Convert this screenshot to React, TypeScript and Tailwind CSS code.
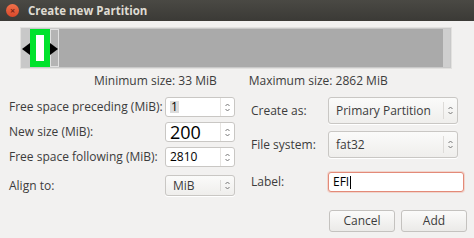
import React from "react";

const font = { fontFamily: '"Open Sans", "Noto Sans", sans-serif' };

function SpinArrows() {
    return (
        <svg width="7" height="11" viewBox="0 0 7 11" className="text-[#777]">
            <path d="M1.5 4 L3.5 2 L5.5 4" fill="none" stroke="currentColor" strokeWidth="1" />
            <path d="M1.5 7 L3.5 9 L5.5 7" fill="none" stroke="currentColor" strokeWidth="1" />
        </svg>
    );
}

function SpinBox({ value, big, selected }: { value: string; big?: boolean; selected?: boolean }) {
    return (
        <div className="flex h-[20px] w-[70px] items-stretch rounded-[3px] border border-[#c9c7c4] bg-white">
            <div className="flex flex-1 items-center pl-[4px]">
                <span
                    className={`leading-none text-black ${big ? "text-[18px]" : "text-[12px] text-[#3c3c3c]"} ${selected ? "bg-[#dcdcdc] px-[1px]" : ""}`}
                >
                    {value}
                </span>
            </div>
            <div className="flex w-[14px] items-center justify-center border-l border-[#e6e4e1]">
                <SpinArrows />
            </div>
        </div>
    );
}

function Combo({ value, w, h }: { value: string; w: string; h: string }) {
    return (
        <div className={`flex ${w} ${h} items-stretch rounded-[3px] border border-[#c9c7c4] bg-gradient-to-b from-[#fbfbfa] to-[#efeeec] shadow-[0_1px_0_#fff]`}>
            <div className="flex flex-1 items-center pl-[7px] text-[12px] text-[#3c3c3c]">{value}</div>
            <div className="my-[4px] flex w-[14px] items-center justify-center border-l border-[#dddbd8]">
                <SpinArrows />
            </div>
        </div>
    );
}

function Button({ label }: { label: string }) {
    return (
        <div className="flex h-[22px] w-[66px] items-center justify-center rounded-[3px] border border-[#c4c2bf] bg-gradient-to-b from-[#fbfbfa] to-[#ebeae8] text-[12px] text-[#3c3c3c]">
            {label}
        </div>
    );
}

export default function App() {
    return (
        <div className="h-[238px] w-[474px] overflow-hidden bg-[#f2f1f0]" style={font}>
            {/* title bar */}
            <div className="flex h-[21px] items-center bg-gradient-to-b from-[#4a4944] to-[#3b3a36] pl-[6px]">
                <div className="flex h-[13px] w-[13px] items-center justify-center rounded-full bg-gradient-to-b from-[#f0714a] to-[#d9472a]">
                    <span className="text-[9px] font-bold leading-none text-[#7a2415]">×</span>
                </div>
                <span className="ml-[9px] text-[11.5px] font-bold text-[#dfdbd2]">Create new Partition</span>
            </div>

            {/* partition slider */}
            <div className="ml-[20px] mt-[6px] flex h-[42px] w-[432px] border border-[#e2e1df] bg-[#e8e7e5]">
                <div className="relative flex flex-1 border border-[#c9c9c9]">
                    <div className="w-[8px] bg-[#c8c8c8]" />
                    <div className="flex w-[20px] items-center justify-center bg-[#00e22c]">
                        <div className="h-[26px] w-[8px] bg-white" />
                    </div>
                    <div className="w-[9px] border border-[#e0e0e0] bg-[#b4b4b4]" />
                    <div className="flex-1 bg-[#aaaaaa]" />
                    <div className="w-[7px] bg-[#cfcfcf]" />
                    <svg className="absolute left-[0px] top-[14px]" width="9" height="12" viewBox="0 0 9 12">
                        <path d="M8 0 L0 6 L8 12 Z" fill="#000" />
                    </svg>
                    <svg className="absolute left-[28px] top-[14px]" width="9" height="12" viewBox="0 0 9 12">
                        <path d="M0 0 L8 6 L0 12 Z" fill="#000" />
                    </svg>
                </div>
            </div>

            {/* size limits */}
            <div className="mt-[4px] flex text-[12px] leading-[16px] text-[#3c3c3c]">
                <span className="ml-[94px]">Minimum size: 33 MiB</span>
                <span className="ml-[32px]">Maximum size: 2862 MiB</span>
            </div>

            <div className="mt-[5px] flex">
                {/* left column */}
                <div className="ml-[9px] flex w-[226px] flex-col text-[12px] text-[#3c3c3c]">
                    <div className="mt-[3px] flex items-center justify-between">
                        <span>Free space preceding (MiB):</span>
                        <SpinBox value="1" selected />
                    </div>
                    <div className="mt-[5px] flex items-center justify-between">
                        <span>New size (MiB):</span>
                        <SpinBox value="200" big />
                    </div>
                    <div className="mt-[5px] flex items-center justify-between">
                        <span>Free space following (MiB):</span>
                        <SpinBox value="2810" />
                    </div>
                    <div className="mt-[8px] flex items-center justify-between">
                        <span>Align to:</span>
                        <Combo value="MiB" w="w-[70px]" h="h-[21px]" />
                    </div>
                </div>

                {/* right column */}
                <div className="ml-[16px] flex flex-col text-[12px] text-[#3c3c3c]">
                    <div className="mt-[3px] flex items-center">
                        <span className="w-[77px]">Create as:</span>
                        <Combo value="Primary Partition" w="w-[130px]" h="h-[27px]" />
                    </div>
                    <div className="mt-[7px] flex items-center">
                        <span className="w-[77px]">File system:</span>
                        <Combo value="fat32" w="w-[130px]" h="h-[27px]" />
                    </div>
                    <div className="mt-[14px] flex items-center">
                        <span className="w-[77px]">Label:</span>
                        <div className="flex h-[20px] w-[136px] items-center rounded-[3px] border border-[#e38a78] bg-white pl-[4px] shadow-[0_0_0_1px_rgba(240,160,140,0.35)]">
                            <span className="text-[12px] text-black">EFI</span>
                            <span className="ml-[1px] h-[13px] w-px bg-black" />
                        </div>
                    </div>
                    <div className="ml-[78px] mt-[18px] flex gap-[6px]">
                        <Button label="Cancel" />
                        <Button label="Add" />
                    </div>
                </div>
            </div>
        </div>
    );
}
